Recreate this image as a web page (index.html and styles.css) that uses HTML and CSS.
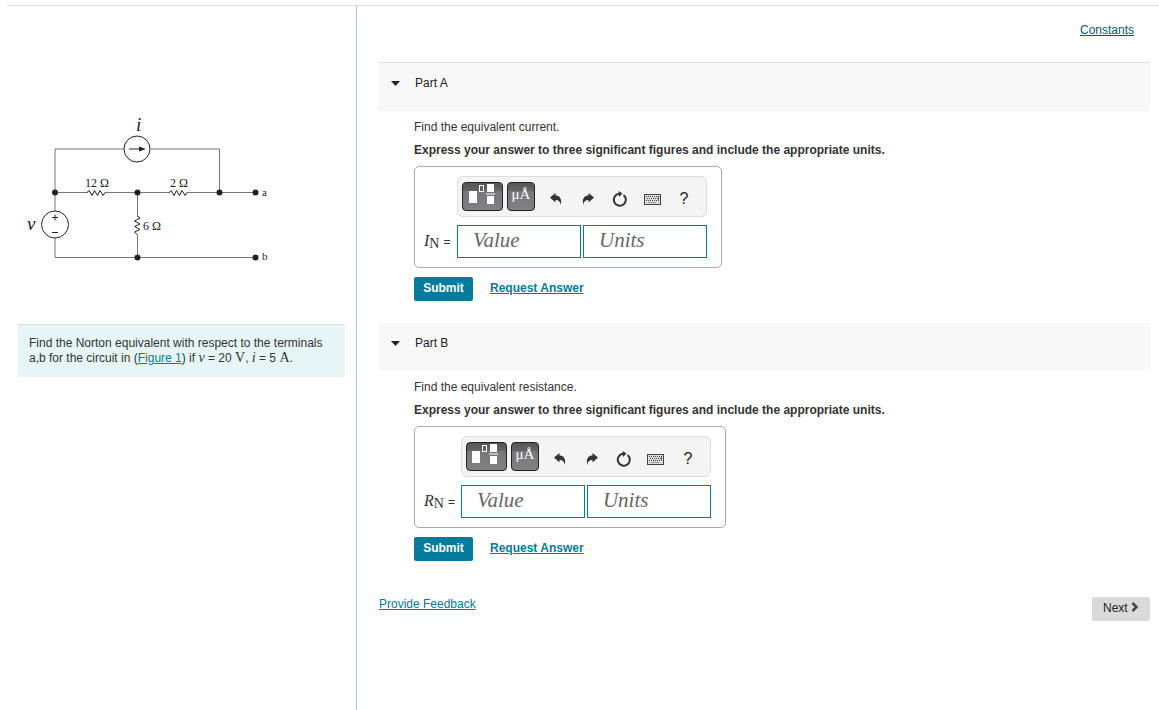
FILE: index.html
```html
<!DOCTYPE html>
<html lang="en">
<head>
    <meta charset="UTF-8">
    <meta name="viewport" content="width=device-width, initial-scale=1.0">
    <title>Norton Equivalent</title>
    <link rel="stylesheet" href="styles.css">
</head>
<body>
    <!-- Shared toolbar icons -->
    <svg class="icon-defs" aria-hidden="true">
        <symbol id="icon-template" viewBox="0 0 28 22">
            <rect x="0" y="7" width="8" height="12" fill="#fff"/>
            <rect x="10.500" y="1.500" width="4" height="6" fill="none" stroke="#fff"/>
            <rect x="18" y="0" width="7" height="8" fill="#fff"/>
            <rect x="17" y="9" width="9" height="2" fill="#bbb"/>
            <rect x="18" y="12" width="7" height="8" fill="#fff"/>
        </symbol>
        <symbol id="icon-undo" viewBox="0 0 12 12">
            <path d="M0 4.500 5.500 0v2.500C9.500 2.500 12.500 6 10.500 12 10.500 8.500 8.500 7 5.500 7V9.500Z" fill="#333"/>
        </symbol>
        <symbol id="icon-redo" viewBox="0 0 12 12">
            <path d="M12 4.500 6.500 0v2.500C2.500 2.500 -.5 6 1.500 12 1.500 8.500 3.500 7 6.500 7V9.500Z" fill="#333"/>
        </symbol>
        <symbol id="icon-reset" viewBox="0 0 16 16">
            <path d="M11.500 4A6 6 0 1 1 7 2.800" fill="none" stroke="#333" stroke-width="2"/>
            <path d="M6.500 0 10.500 2.500 7 6Z" fill="#333"/>
        </symbol>
        <symbol id="icon-keyboard" viewBox="0 0 17 11">
            <rect x=".5" y=".5" width="16" height="10" fill="#ddd" stroke="#444"/>
            <path d="M2 2.500h13M3 4.500h12M2 6.500h12" stroke="#444" stroke-dasharray="1 1"/>
            <path d="M4 8.500h8" stroke="#999"/>
            <path d="M14.500 3v4" stroke="#666"/>
        </symbol>
    </svg>

    <div class="page">
        <aside class="problem">
            <svg class="circuit" viewBox="0 0 290 180" role="img" aria-label="Circuit with terminals a and b">
                <g class="wire">
                    <path d="M124 49H55V111M55 138V157.500H255M151 49H219.500V92.500"/>
                    <path d="M55 92.500H88M105 92.500H170M187 92.500H255M137.500 92V117M137.500 135V157"/>
                </g>
                <g class="part-line">
                    <circle cx="137" cy="49" r="13"/>
                    <circle cx="55" cy="124.500" r="13.500"/>
                    <path d="M87 92.500l2-2 3 5 2.500-5 3 5 2.500-5 3 5 2-3M169 92.500l2-2 3 5 2.500-5 3 5 2.500-5 3 5 2-3M137.500 116l2.500 2-5.500 3 5.500 3-5.500 2.500 5.500 3-5.500 2.500 3 3"/>
                    <path d="M129 49h11M52 117.500h6M55 114.500v6M52 132.500h6"/>
                </g>
                <path d="M139 46.500 146 49 139 51.500Z"/>
                <circle cx="55" cy="92.500" r="3"/>
                <circle cx="137.500" cy="92.500" r="3"/>
                <circle cx="219.500" cy="92.500" r="3"/>
                <circle cx="255.500" cy="92.500" r="3"/>
                <circle cx="137.500" cy="157.500" r="3"/>
                <circle cx="255.500" cy="157.500" r="3"/>
                <text class="source" x="136" y="31">i</text>
                <text class="source" x="27" y="130">v</text>
                <text x="85" y="87">12 Ω</text>
                <text x="170" y="87">2 Ω</text>
                <text x="143" y="130">6 Ω</text>
                <text class="terminal" x="262" y="96">a</text>
                <text class="terminal" x="262" y="160">b</text>
            </svg>
            <p class="statement">Find the Norton equivalent with respect to the terminals a,b for the circuit in (<a href="#">Figure 1</a>) if <i class="math">v</i> = 20 <span class="math">V</span>, <i class="math">i</i> = 5 <span class="math">A</span>.</p>
        </aside>

        <main class="work">
            <div class="top-links"><a href="#">Constants</a></div>

            <section class="part">
                <h2 class="part-title first"><span class="caret"></span>Part A</h2>
                <div class="part-body">
                    <p>Find the equivalent current.</p>
                    <p class="instruction">Express your answer to three significant figures and include the appropriate units.</p>
                    <div class="answer">
                        <div class="toolbar">
                            <button class="tool dark wide" type="button" aria-label="Templates"><svg width="28" height="22"><use href="#icon-template"/></svg></button>
                            <button class="tool dark" type="button">μÅ</button>
                            <button class="tool" type="button" aria-label="Undo"><svg width="12" height="12"><use href="#icon-undo"/></svg></button>
                            <button class="tool" type="button" aria-label="Redo"><svg width="12" height="12"><use href="#icon-redo"/></svg></button>
                            <button class="tool" type="button" aria-label="Reset"><svg width="16" height="16"><use href="#icon-reset"/></svg></button>
                            <button class="tool keyboard" type="button" aria-label="Keyboard shortcuts"><svg width="17" height="11"><use href="#icon-keyboard"/></svg></button>
                            <button class="tool help" type="button">?</button>
                        </div>
                        <label class="symbol" for="valueA"><i>I</i><sub>N</sub> <span>=</span></label>
                        <div class="fields">
                            <input type="text" id="valueA" placeholder="Value">
                            <input type="text" aria-label="Units" placeholder="Units">
                        </div>
                    </div>
                    <div class="actions">
                        <button class="submit" type="button">Submit</button>
                        <a href="#">Request Answer</a>
                    </div>
                </div>
            </section>

            <section class="part">
                <h2 class="part-title"><span class="caret"></span>Part B</h2>
                <div class="part-body">
                    <p>Find the equivalent resistance.</p>
                    <p class="instruction">Express your answer to three significant figures and include the appropriate units.</p>
                    <div class="answer">
                        <div class="toolbar">
                            <button class="tool dark wide" type="button" aria-label="Templates"><svg width="28" height="22"><use href="#icon-template"/></svg></button>
                            <button class="tool dark" type="button">μÅ</button>
                            <button class="tool" type="button" aria-label="Undo"><svg width="12" height="12"><use href="#icon-undo"/></svg></button>
                            <button class="tool" type="button" aria-label="Redo"><svg width="12" height="12"><use href="#icon-redo"/></svg></button>
                            <button class="tool" type="button" aria-label="Reset"><svg width="16" height="16"><use href="#icon-reset"/></svg></button>
                            <button class="tool keyboard" type="button" aria-label="Keyboard shortcuts"><svg width="17" height="11"><use href="#icon-keyboard"/></svg></button>
                            <button class="tool help" type="button">?</button>
                        </div>
                        <label class="symbol" for="valueB"><i>R</i><sub>N</sub> <span>=</span></label>
                        <div class="fields">
                            <input type="text" id="valueB" placeholder="Value">
                            <input type="text" aria-label="Units" placeholder="Units">
                        </div>
                    </div>
                    <div class="actions">
                        <button class="submit" type="button">Submit</button>
                        <a href="#">Request Answer</a>
                    </div>
                </div>
            </section>

            <footer class="bottom">
                <a href="#">Provide Feedback</a>
                <button class="next" type="button">Next <svg width="8" height="10" viewBox="0 0 8 10"><path d="M1.500 1 5.500 5 1.500 9" fill="none" stroke="#444" stroke-width="2.500"/></svg></button>
            </footer>
        </main>
    </div>
</body>
</html>
```
FILE: styles.css
```css
* {
    box-sizing: border-box;
}

body {
    margin: 0;
    padding-top: 5px;
    font-family: "Liberation Sans", Arial, sans-serif;
    font-size: 12px;
    line-height: 15px;
    color: #333;
    background-color: white;
}

p, h2 {
    margin: 0;
}

a {
    color: #047a9c;
    text-underline-offset: 1px;
}

button {
    font-family: inherit;
    font-size: 12px;
    cursor: pointer;
}

.icon-defs {
    display: none;
}

.page {
    display: flex;
    min-height: calc(100vh - 5px);
    margin-left: 7px;
    border-top: 1px solid #ddd;
}

/* Left column with the problem */
.problem {
    width: 350px;
    flex: none;
    padding: 94px 11px 0;
    border-right: 1px solid #b0c9da;
}

.circuit {
    display: block;
    width: 290px;
    height: 180px;
    margin-left: -18px;
    margin-bottom: 44px;
    font-family: "Liberation Serif", serif;
    font-size: 12px;
    fill: #222;
}

.circuit .source {
    font-size: 19px;
    font-style: italic;
}

.circuit .terminal {
    font-size: 11px;
}

.wire path {
    fill: none;
    stroke: #777;
}

.part-line {
    fill: none;
    stroke: #222;
}

.statement {
    padding: 11px;
    min-height: 53px;
    border-top: 1px solid #ddd;
    background-color: #e6f6f7;
}

.math {
    font-family: "Liberation Serif", serif;
    font-size: 14px;
    line-height: 1;
}

/* Right column */
.work {
    flex: 1;
    padding: 17px 9px 0 22px;
}

.top-links {
    padding-right: 16px;
    margin-bottom: 24px;
    text-align: right;
}

.top-links a {
    color: #005a70;
}

.part-title {
    display: flex;
    height: 48px;
    padding: 13px 12px;
    background-color: #f8f8f8;
    color: #222;
    font-size: 12px;
    font-weight: normal;
}

.part-title.first {
    height: 49px;
    border-top: 1px solid #ddd;
}

.caret {
    width: 9px;
    height: 5px;
    margin: 5px 15px 0 0;
    background-color: #222;
    clip-path: polygon(0 0, 100% 0, 50% 100%);
}

.part-body {
    padding: 9px 0 22px 35px;
}

.part-body p {
    margin-bottom: 8px;
}

.part-body .instruction {
    font-weight: bold;
}

.answer {
    display: inline-grid;
    grid-template-columns: auto auto;
    gap: 8px 6px;
    padding: 9px 14px 9px 9px;
    border: 1px solid #aaa;
    border-radius: 5px;
    vertical-align: top;
}

.toolbar {
    grid-column: 2;
    display: flex;
    align-items: center;
    height: 41px;
    padding: 0 4px;
    border: 1px solid #ddd;
    border-radius: 6px;
    background-color: #f4f4f4;
}

.tool {
    display: flex;
    align-items: center;
    justify-content: center;
    flex: none;
    width: 32px;
    height: 32px;
    padding: 4px 0 0 2px;
    border: none;
    background: none;
    color: #222;
}

.tool.dark {
    width: 28px;
    height: 29px;
    margin-right: 4px;
    padding: 0 0 4px;
    border: 1px solid #222;
    border-radius: 4px;
    background: linear-gradient(#555 0, #666 30%, #77777b 31%, #808085 100%);
    color: white;
    font-family: "Liberation Serif", serif;
    font-size: 15px;
}

.tool.wide {
    width: 41px;
}

.tool.keyboard {
    padding-top: 6px;
}

.tool.help {
    font-size: 16px;
}

.symbol {
    align-self: center;
    min-width: 27px;
    font-family: "Liberation Serif", serif;
    font-size: 16px;
    white-space: nowrap;
}

.symbol sub {
    font-size: 14px;
    line-height: 0;
    vertical-align: -2px;
}

.symbol span {
    font-family: "Liberation Sans", Arial, sans-serif;
    font-size: 12px;
}

.fields {
    display: flex;
    gap: 2px;
}

.fields input {
    width: 124px;
    height: 33px;
    padding: 0 15px 2px;
    border: 1px solid #047a9c;
    border-radius: 0;
    font-family: "Liberation Serif", serif;
    font-size: 21px;
    font-style: italic;
}

.fields input::placeholder {
    color: #666;
}

.actions {
    display: flex;
    gap: 17px;
    margin-top: 9px;
    font-weight: bold;
}

.actions a {
    padding-top: 4px;
}

.submit {
    width: 59px;
    height: 24px;
    padding: 0 0 2px;
    border: none;
    border-radius: 2px;
    background-color: #047a9c;
    color: white;
    font-weight: bold;
}

.bottom {
    display: flex;
    justify-content: space-between;
    margin-top: 14px;
}

.next {
    width: 58px;
    height: 24px;
    padding: 0 0 2px;
    border: none;
    border-radius: 2px;
    background-color: #d9d9d9;
    color: #222;
}
```
